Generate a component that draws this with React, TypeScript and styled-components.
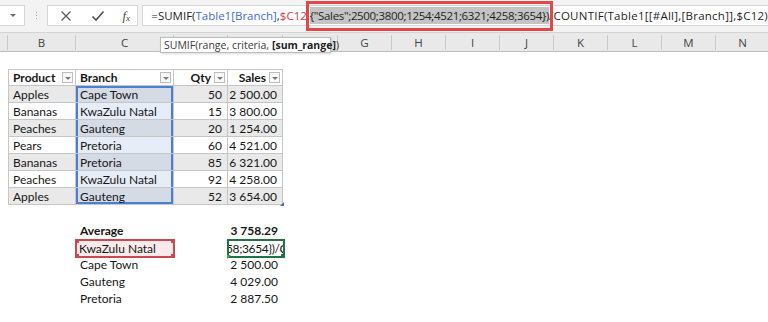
import styled, { createGlobalStyle } from 'styled-components';

const GlobalStyle = createGlobalStyle`
  html, body {
    margin: 0;
    padding: 0;
    background: #ffffff;
    overflow: hidden;
  }
`;

const COLS = '8px 68px 98px 54px 55px 55px 54px 54px 54px 54px 54px 54px 54px 54px';

const NB = '\u00a0';

const rows = [
  ['Apples', 'Cape Town', '50', `2${NB}500.00`],
  ['Bananas', 'KwaZulu Natal', '15', `3${NB}800.00`],
  ['Peaches', 'Gauteng', '20', `1${NB}254.00`],
  ['Pears', 'Pretoria', '60', `4${NB}521.00`],
  ['Bananas', 'Pretoria', '85', `6${NB}321.00`],
  ['Peaches', 'KwaZulu Natal', '92', `4${NB}258.00`],
  ['Apples', 'Gauteng', '52', `3${NB}654.00`],
];

const summary = [
  ['Cape Town', `2${NB}500.00`],
  ['Gauteng', `4${NB}029.00`],
  ['Pretoria', `2${NB}887.50`],
];

const letters = ['', 'B', 'C', '', '', '', 'G', 'H', 'I', 'J', 'K', 'L', 'M', 'N'];

export default function App() {
  return (
    <Page>
      <GlobalStyle />
      <FormulaBar>
        <NameBox>
          <DropArrow />
        </NameBox>
        <Grip>
          <span />
          <span />
          <span />
        </Grip>
        <EditButtons>
          <svg width="12" height="12" viewBox="0 0 12 12">
            <path d="M1.5 1.5 L10.5 10.5 M10.5 1.5 L1.5 10.5" stroke="#5a5a5a" strokeWidth="1.3" fill="none" />
          </svg>
          <svg width="14" height="12" viewBox="0 0 14 12">
            <path d="M1.5 6.5 L5 10 L12.5 1.5" stroke="#4f4f4f" strokeWidth="1.6" fill="none" />
          </svg>
          <Fx>
            f<sub>x</sub>
          </Fx>
        </EditButtons>
        <FormulaInput>
          <span>=SUMIF(</span>
          <Ref $c="#3b6cc8">Table1[Branch]</Ref>
          <span>,</span>
          <Ref $c="#d6383d">$C12</Ref>
          <span>,</span>
          <Picked>{'{"Sales";2500;3800;1254;4521;6321;4258;3654})'}</Picked>
          <Tail>/COUNTIF(Table1[[#All],[Branch]],$C12)</Tail>
        </FormulaInput>
      </FormulaBar>

      <HeaderRow>
        {letters.map((l, i) => (
          <ColHead key={i}>{l}</ColHead>
        ))}
        <Tip>
          SUMIF(range, criteria, <b>[sum_range]</b>)
        </Tip>
      </HeaderRow>

      <Sheet>
        <Row />
        <Row>
          <Cell />
          <TCell $head $first>
            Product
            <FilterBtn />
          </TCell>
          <TCell $head>
            Branch
            <FilterBtn />
          </TCell>
          <TCell $head $right>
            Qty
            <FilterBtn />
          </TCell>
          <TCell $head $right>
            Sales
            <FilterBtn $over />
          </TCell>
        </Row>
        {rows.map((r, i) => {
          const band = i % 2 === 0;
          return (
            <Row key={i}>
              <Cell />
              <TCell $band={band} $first>
                {r[0]}
              </TCell>
              <TCell $band={band} $sel $selTop={i === 0} $selBottom={i === rows.length - 1}>
                {r[1]}
              </TCell>
              <TCell $band={band} $right>
                {r[2]}
              </TCell>
              <TCell $band={band} $right>
                {r[3]}
                {i === rows.length - 1 && <ResizeCorner />}
              </TCell>
            </Row>
          );
        })}
        <Row />
        <Row>
          <Cell />
          <Cell />
          <Cell $bold>Average</Cell>
          <Cell />
          <Cell $bold $right>
            3{NB}758.29
          </Cell>
        </Row>
        <Row>
          <Cell />
          <Cell />
          <RefCell>
            KwaZulu Natal
            <Handle $c="#c84a4e" style={{ left: -2, top: -2 }} />
            <Handle $c="#c84a4e" style={{ right: -2, top: -2 }} />
            <Handle $c="#c84a4e" style={{ left: -2, bottom: -2 }} />
            <Handle $c="#c84a4e" style={{ right: -2, bottom: -2 }} />
          </RefCell>
          <Cell />
          <EditCell>
            <EditText>{'58;3654})/C'}</EditText>
            <GreenTick />
            <Handle $c="#217346" style={{ right: -2, bottom: -2 }} />
          </EditCell>
        </Row>
        {summary.map((s) => (
          <Row key={s[0]}>
            <Cell />
            <Cell />
            <Cell>{s[0]}</Cell>
            <Cell />
            <Cell $right>{s[1]}</Cell>
          </Row>
        ))}
        <Row />
      </Sheet>
    </Page>
  );
}

const Page = styled.div`
  width: 768px;
  height: 322px;
  overflow: hidden;
  background: #ffffff;
`;

const FormulaBar = styled.div`
  background: #f3f3f3;
  border-bottom: 1px solid #d4d4d4;
  display: flex;
  align-items: flex-start;
  padding-top: 5px;
  box-sizing: border-box;
  height: 33px;
`;

const NameBox = styled.div`
  width: 25px;
  height: 21px;
  background: #ffffff;
  border: 1px solid #d6d6d6;
  border-left: none;
  box-sizing: border-box;
  display: flex;
  align-items: center;
  justify-content: flex-end;
  padding-right: 8px;
`;

const DropArrow = styled.span`
  width: 0;
  height: 0;
  border-left: 3px solid transparent;
  border-right: 3px solid transparent;
  border-top: 3px solid #6b6b6b;
`;

const Grip = styled.div`
  width: 23px;
  height: 21px;
  display: flex;
  flex-direction: column;
  align-items: center;
  justify-content: center;
  gap: 2px;

  span {
    width: 1px;
    height: 1px;
    background: #a8a8a8;
  }
`;

const EditButtons = styled.div`
  width: 92px;
  height: 21px;
  background: #ffffff;
  border: 1px solid #d6d6d6;
  box-sizing: border-box;
  display: flex;
  align-items: center;
  gap: 19px;
  padding-left: 12px;
`;

const Fx = styled.span`
  font-family: 'Liberation Serif', serif;
  font-style: italic;
  font-size: 13px;
  color: #4a4a4a;
  line-height: 1;
  margin-left: -2px;

  sub {
    font-size: 9px;
    vertical-align: -1px;
  }
`;

const FormulaInput = styled.div`
  flex: 1;
  height: 21px;
  margin-left: 4px;
  background: #ffffff;
  border: 1px solid #d6d6d6;
  border-right: none;
  box-sizing: border-box;
  display: flex;
  align-items: center;
  padding-left: 8px;
  font-family: 'Open Sans', 'Noto Sans', sans-serif;
  font-size: 11.5px;
  color: #1e1e1e;
  white-space: nowrap;
  overflow: visible;
`;

const Ref = styled.span<{ $c: string }>`
  color: ${(p) => p.$c};
`;

const Picked = styled.span`
  position: relative;
  background: #c4c4c4;
  padding: 1px 0;
  letter-spacing: -0.33px;

  &::after {
    content: '';
    position: absolute;
    left: -4px;
    right: -4px;
    top: -6px;
    bottom: -7px;
    border: 3px solid #e2474a;
    pointer-events: none;
  }
`;

const Tail = styled.span`
  letter-spacing: 0.25px;
`;

const HeaderRow = styled.div`
  position: relative;
  display: grid;
  grid-template-columns: ${COLS};
  height: 19px;
  background: #e9e9e9;
  border-bottom: 1px solid #bdbdbd;
  box-sizing: border-box;
`;

const ColHead = styled.div`
  border-right: 1px solid #c9c9c9;
  font-family: 'Open Sans', 'Noto Sans', sans-serif;
  font-size: 11.5px;
  color: #444444;
  display: flex;
  align-items: center;
  justify-content: center;
  margin: 2px 0;
`;

const Tip = styled.div`
  position: absolute;
  left: 160px;
  top: 4px;
  height: 16px;
  width: 171px;
  box-sizing: border-box;
  background: #ffffff;
  border: 1px solid #bcbcbc;
  box-shadow: 1px 1px 2px rgba(0, 0, 0, 0.15);
  font-family: 'Open Sans', 'Noto Sans', sans-serif;
  font-size: 10.5px;
  color: #3a3a3a;
  display: flex;
  align-items: center;
  padding-left: 3px;
  white-space: nowrap;

  b {
    margin-left: 3px;
    color: #222222;
  }
`;

const Sheet = styled.div`
  display: flex;
  flex-direction: column;
`;

const Row = styled.div`
  display: grid;
  grid-template-columns: ${COLS};
  height: 17px;
`;

const Cell = styled.div<{ $bold?: boolean; $right?: boolean }>`
  position: relative;
  font-family: 'Lato', 'Liberation Sans', sans-serif;
  font-size: 12px;
  color: #161616;
  font-weight: ${(p) => (p.$bold ? 700 : 400)};
  display: flex;
  align-items: center;
  justify-content: ${(p) => (p.$right ? 'flex-end' : 'flex-start')};
  padding: 0 5px 0 4px;
  white-space: nowrap;
  box-sizing: border-box;
`;

const TCell = styled(Cell)<{
  $head?: boolean;
  $band?: boolean;
  $first?: boolean;
  $sel?: boolean;
  $selTop?: boolean;
  $selBottom?: boolean;
}>`
  font-weight: ${(p) => (p.$head ? 700 : 400)};
  background: ${(p) =>
    p.$sel ? (p.$band ? '#d5dbe5' : '#e6edf8') : p.$band ? '#e9e9e9' : '#ffffff'};
  border-right: 1px solid #c6c6c6;
  border-bottom: 1px solid #c6c6c6;
  border-left: ${(p) => (p.$first ? '1px solid #c6c6c6' : 'none')};
  border-top: ${(p) => (p.$head ? '1px solid #c6c6c6' : 'none')};
  padding-right: ${(p) => (p.$head && p.$right ? '16px' : '5px')};
  box-shadow: ${(p) =>
    p.$sel
      ? [
          'inset 2px 0 0 #4a7fd4',
          'inset -2px 0 0 #4a7fd4',
          p.$selTop ? 'inset 0 2px 0 #4a7fd4' : '',
          p.$selBottom ? 'inset 0 -2px 0 #4a7fd4' : '',
        ]
          .filter(Boolean)
          .join(', ')
      : 'none'};
`;

const FilterBtn = styled.span<{ $over?: boolean }>`
  position: absolute;
  right: 2px;
  top: 2px;
  width: 11px;
  height: 11px;
  box-sizing: border-box;
  background: ${(p) => (p.$over ? 'rgba(248,248,248,0.85)' : '#f8f8f8')};
  border: 1px solid #bdbdbd;

  &::after {
    content: '';
    position: absolute;
    left: 2px;
    top: 4px;
    border-left: 3px solid transparent;
    border-right: 3px solid transparent;
    border-top: 3px solid #7a7a7a;
  }
`;

const ResizeCorner = styled.span`
  position: absolute;
  right: -2px;
  bottom: -2px;
  width: 0;
  height: 0;
  border-left: 4px solid transparent;
  border-bottom: 4px solid #3d6fc4;
`;

const RefCell = styled(Cell)`
  background: #fbeaea;
  border: 2px solid #c84a4e;
  margin: 0 -1px 0 -1px;
  padding-left: 2px;
`;

const Handle = styled.span<{ $c: string }>`
  position: absolute;
  width: 4px;
  height: 4px;
  background: ${(p) => p.$c};
`;

const EditCell = styled(Cell)`
  border: 2px solid #217346;
  margin: 0 -2px 0 -1px;
  padding: 0;
  overflow: visible;
  justify-content: flex-start;
`;

const EditText = styled.span`
  display: block;
  width: 100%;
  overflow: hidden;
  text-indent: -3px;
  letter-spacing: -0.35px;
  white-space: nowrap;
`;

const GreenTick = styled.span`
  position: absolute;
  left: -2px;
  bottom: -3px;
  width: 0;
  height: 0;
  border-right: 4px solid transparent;
  border-top: 4px solid #3aa04a;
`;
